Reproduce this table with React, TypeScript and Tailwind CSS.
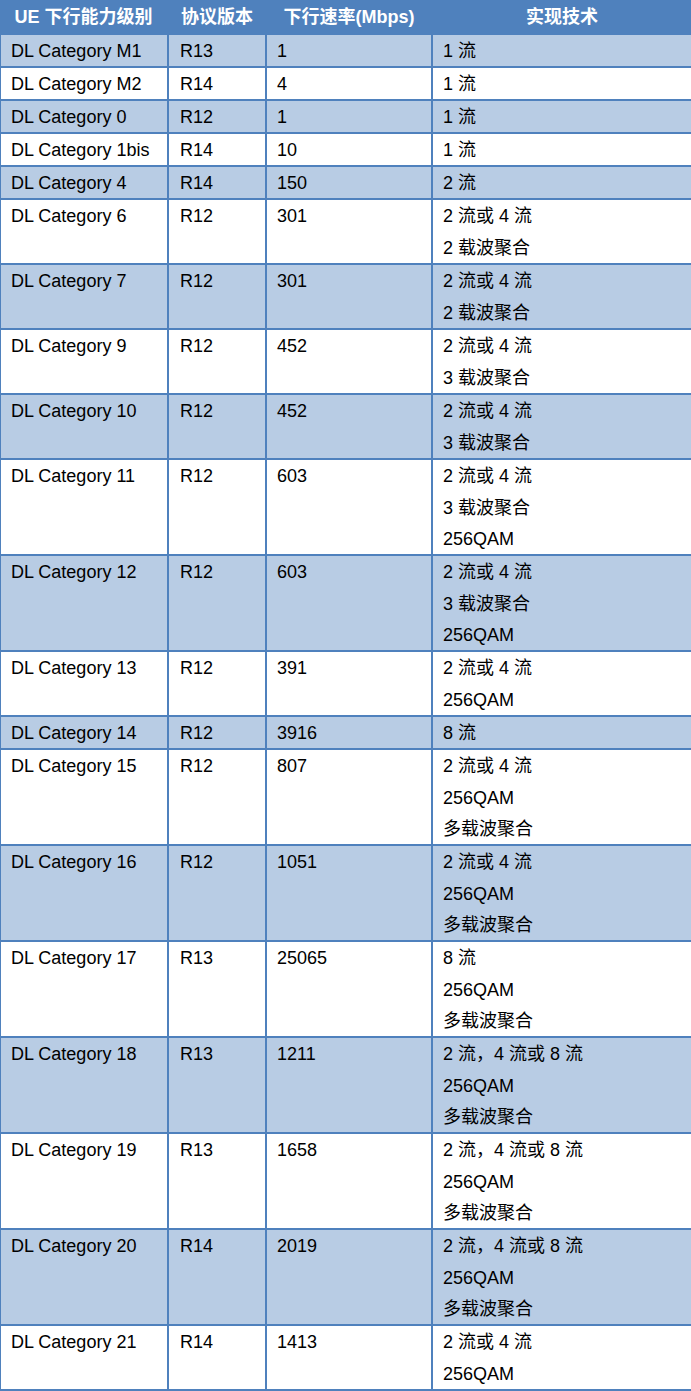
const rows: { cat: string; ver: string; rate: string; tech: string[] }[] = [
  { cat: "DL Category M1", ver: "R13", rate: "1", tech: ["1 流"] },
  { cat: "DL Category M2", ver: "R14", rate: "4", tech: ["1 流"] },
  { cat: "DL Category 0", ver: "R12", rate: "1", tech: ["1 流"] },
  { cat: "DL Category 1bis", ver: "R14", rate: "10", tech: ["1 流"] },
  { cat: "DL Category 4", ver: "R14", rate: "150", tech: ["2 流"] },
  { cat: "DL Category 6", ver: "R12", rate: "301", tech: ["2 流或 4 流", "2 载波聚合"] },
  { cat: "DL Category 7", ver: "R12", rate: "301", tech: ["2 流或 4 流", "2 载波聚合"] },
  { cat: "DL Category 9", ver: "R12", rate: "452", tech: ["2 流或 4 流", "3 载波聚合"] },
  { cat: "DL Category 10", ver: "R12", rate: "452", tech: ["2 流或 4 流", "3 载波聚合"] },
  { cat: "DL Category 11", ver: "R12", rate: "603", tech: ["2 流或 4 流", "3 载波聚合", "256QAM"] },
  { cat: "DL Category 12", ver: "R12", rate: "603", tech: ["2 流或 4 流", "3 载波聚合", "256QAM"] },
  { cat: "DL Category 13", ver: "R12", rate: "391", tech: ["2 流或 4 流", "256QAM"] },
  { cat: "DL Category 14", ver: "R12", rate: "3916", tech: ["8 流"] },
  { cat: "DL Category 15", ver: "R12", rate: "807", tech: ["2 流或 4 流", "256QAM", "多载波聚合"] },
  { cat: "DL Category 16", ver: "R12", rate: "1051", tech: ["2 流或 4 流", "256QAM", "多载波聚合"] },
  { cat: "DL Category 17", ver: "R13", rate: "25065", tech: ["8 流", "256QAM", "多载波聚合"] },
  { cat: "DL Category 18", ver: "R13", rate: "1211", tech: ["2 流，4 流或 8 流", "256QAM", "多载波聚合"] },
  { cat: "DL Category 19", ver: "R13", rate: "1658", tech: ["2 流，4 流或 8 流", "256QAM", "多载波聚合"] },
  { cat: "DL Category 20", ver: "R14", rate: "2019", tech: ["2 流，4 流或 8 流", "256QAM", "多载波聚合"] },
  { cat: "DL Category 21", ver: "R14", rate: "1413", tech: ["2 流或 4 流", "256QAM"] },
];

const heights: Record<number, string> = { 1: "h-[31px]", 2: "h-[63px]", 3: "h-[94px]" };

export default function App() {
  return (
    <div
      className="w-[691px] h-[1391px] overflow-hidden bg-[#4f81bd] text-[18px] text-black"
      style={{ fontFamily: '"Liberation Sans", Arial, "Noto Sans CJK SC", sans-serif' }}
    >
      {/* header */}
      <div className="grid grid-cols-[167px_96px_164px_258px] gap-x-[2px] h-[33px] pt-px items-center font-bold text-white text-center">
        <div>UE 下行能力级别</div>
        <div>协议版本</div>
        <div>下行速率(Mbps)</div>
        <div>实现技术</div>
      </div>

      <div className="flex flex-col gap-[2px] pt-[2px] pl-px">
        {rows.map((r, i) => {
          const bg = i % 2 === 0 ? "bg-[#b8cce4]" : "bg-white";
          const h = heights[r.tech.length];
          return (
            <div key={r.cat} className="grid grid-cols-[166px_96px_164px_258px] gap-x-[2px]">
              <div className={`${bg} ${h} pl-[10px] pt-px leading-[31px]`}>{r.cat}</div>
              <div className={`${bg} ${h} pl-[11px] pt-px leading-[31px]`}>{r.ver}</div>
              <div className={`${bg} ${h} pl-[10px] pt-px leading-[31px]`}>{r.rate}</div>
              <div className={`${bg} ${h} pl-[10px] pt-px leading-[31.5px]`}>
                {r.tech.map((t) => (
                  <div key={t}>{t}</div>
                ))}
              </div>
            </div>
          );
        })}
      </div>
    </div>
  );
}
